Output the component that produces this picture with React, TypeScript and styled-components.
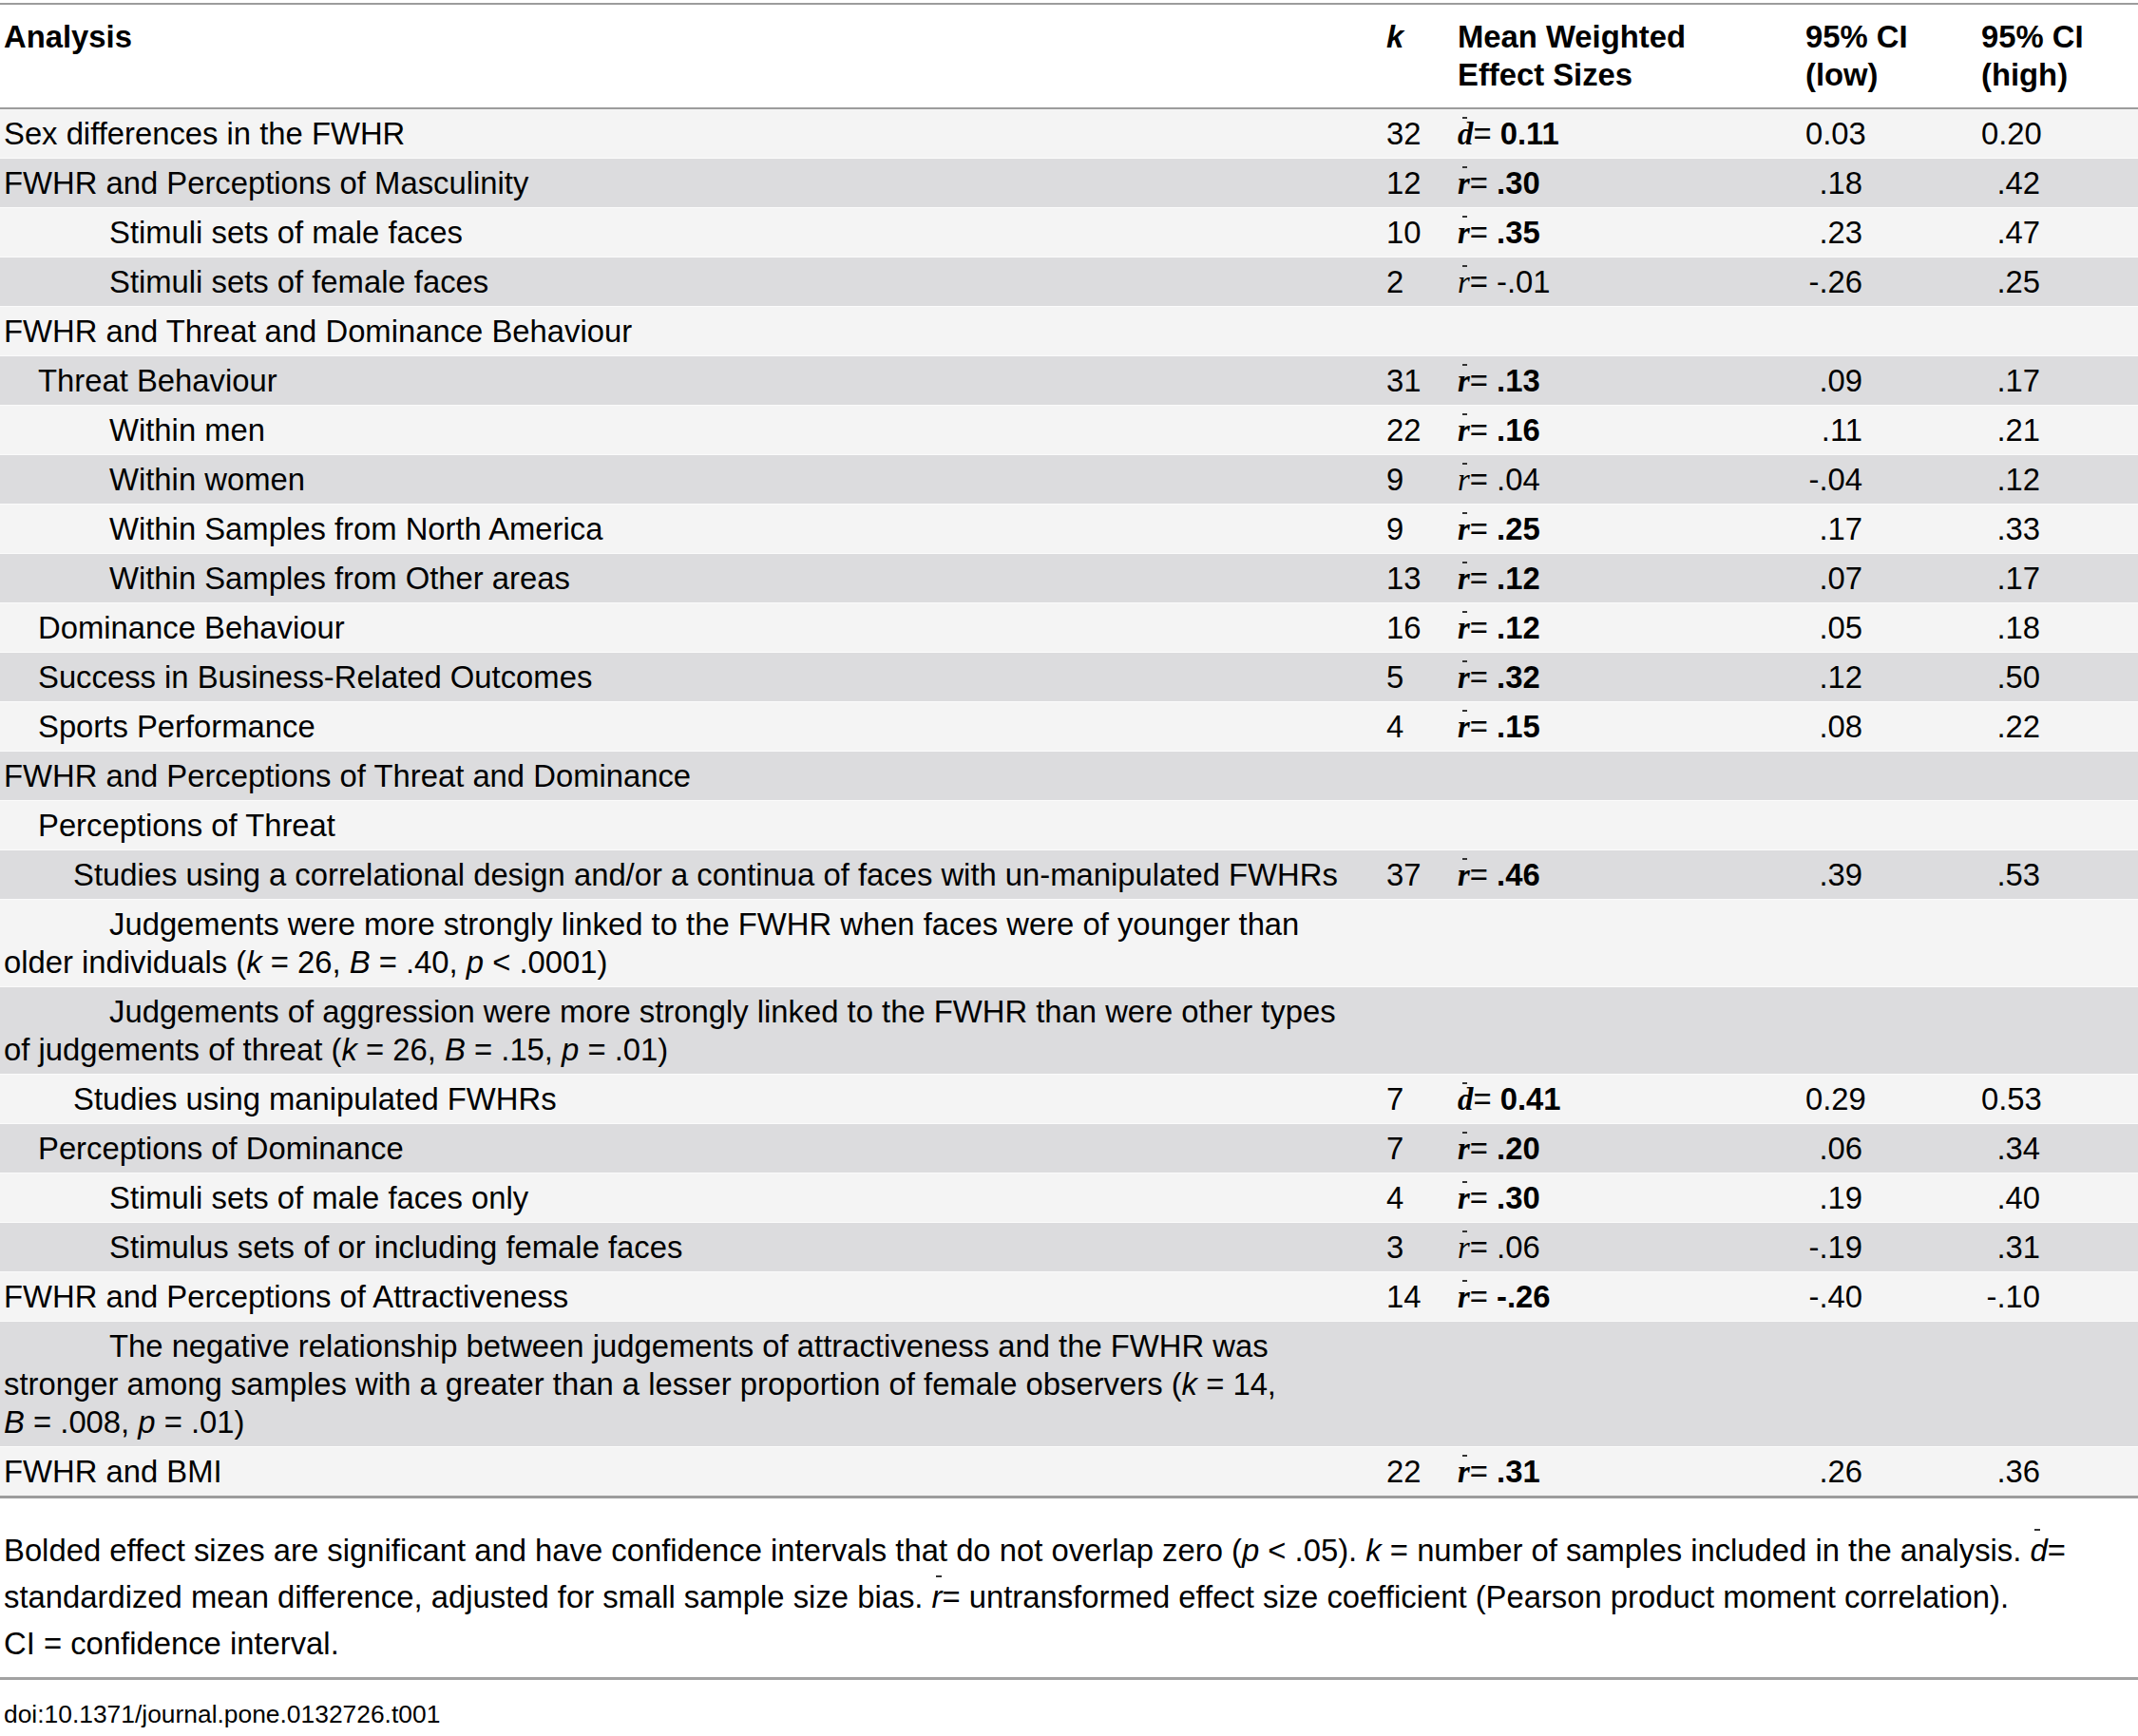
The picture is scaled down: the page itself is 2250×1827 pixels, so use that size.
import React from 'react';
import styled, { createGlobalStyle } from 'styled-components';

const GlobalStyle = createGlobalStyle`
  body {
    margin: 0;
    background: #ffffff;
    color: #000000;
    font-family: "Liberation Sans", Arial, Helvetica, sans-serif;
  }
`;

const Page = styled.div`
  width: 2250px;
  padding-top: 3px;
`;

const Table = styled.table`
  width: 2250px;
  border-collapse: collapse;
  table-layout: fixed;
  font-size: 32.8px;
  border-top: 2px solid #9c9c9c;
  border-bottom: 3px solid #9c9c9c;
`;

const HeadCell = styled.th<{ $first?: boolean }>`
  text-align: left;
  vertical-align: top;
  font-weight: bold;
  line-height: 40px;
  padding: 14px 7px 14px ${(p) => (p.$first ? '4px' : '7px')};
  border-bottom: 2px solid #9c9c9c;
  background: #ffffff;
`;

const Row = styled.tr<{ $dark: boolean }>`
  background: ${(p) => (p.$dark ? '#dcdcde' : '#f4f4f4')};
  border-top: 1px solid #fbfbfb;
`;

const Cell = styled.td`
  vertical-align: top;
  line-height: 40px;
  padding: 6px 7px 5px;
  white-space: nowrap;
`;

// first-line indent for each nesting level of the analysis column
const indents = [0, 36, 73, 111];

const NameCell = styled(Cell)<{ $level: number }>`
  padding-left: 4px;
  white-space: normal;
  text-indent: ${(p) => indents[p.$level]}px;
`;

const CiCell = styled(Cell)<{ $pr: number }>`
  text-align: right;
  padding-right: ${(p) => p.$pr}px;
`;

const Italic = styled.i`
  font-style: italic;
`;

const Sym = styled.span<{ $serif?: boolean; $bold?: boolean }>`
  position: relative;
  display: inline-block;
  font-style: italic;
  font-family: ${(p) => (p.$serif ? '"Liberation Serif", "Times New Roman", serif' : 'inherit')};
  font-weight: ${(p) => (p.$bold ? 'bold' : 'normal')};

  &::before {
    content: '';
    position: absolute;
    top: 0.06em;
    left: 0.14em;
    width: 0.17em;
    height: 2px;
    background: #333333;
  }
`;

const Value = styled.span<{ $bold: boolean }>`
  font-weight: ${(p) => (p.$bold ? 'bold' : 'normal')};
`;

const Notes = styled.p`
  margin: 30px 0 0;
  padding: 0 4px;
  font-size: 32.8px;
  line-height: 49px;
`;

const Rule = styled.div`
  height: 3px;
  margin-top: 11px;
  background: #a2a2a2;
`;

const Doi = styled.div`
  margin-top: 18px;
  padding: 0 4px;
  font-size: 26.4px;
  line-height: 36px;
`;

type DataRow = {
  name: React.ReactNode;
  level: number;
  k?: string;
  sym?: 'd' | 'r';
  value?: string;
  bold?: boolean;
  low?: string;
  high?: string;
};

const rows: DataRow[] = [
  { name: 'Sex differences in the FWHR', level: 0, k: '32', sym: 'd', value: '0.11', bold: true, low: '0.03', high: '0.20' },
  { name: 'FWHR and Perceptions of Masculinity', level: 0, k: '12', sym: 'r', value: '.30', bold: true, low: '.18', high: '.42' },
  { name: 'Stimuli sets of male faces', level: 3, k: '10', sym: 'r', value: '.35', bold: true, low: '.23', high: '.47' },
  { name: 'Stimuli sets of female faces', level: 3, k: '2', sym: 'r', value: '-.01', low: '-.26', high: '.25' },
  { name: 'FWHR and Threat and Dominance Behaviour', level: 0 },
  { name: 'Threat Behaviour', level: 1, k: '31', sym: 'r', value: '.13', bold: true, low: '.09', high: '.17' },
  { name: 'Within men', level: 3, k: '22', sym: 'r', value: '.16', bold: true, low: '.11', high: '.21' },
  { name: 'Within women', level: 3, k: '9', sym: 'r', value: '.04', low: '-.04', high: '.12' },
  { name: 'Within Samples from North America', level: 3, k: '9', sym: 'r', value: '.25', bold: true, low: '.17', high: '.33' },
  { name: 'Within Samples from Other areas', level: 3, k: '13', sym: 'r', value: '.12', bold: true, low: '.07', high: '.17' },
  { name: 'Dominance Behaviour', level: 1, k: '16', sym: 'r', value: '.12', bold: true, low: '.05', high: '.18' },
  { name: 'Success in Business-Related Outcomes', level: 1, k: '5', sym: 'r', value: '.32', bold: true, low: '.12', high: '.50' },
  { name: 'Sports Performance', level: 1, k: '4', sym: 'r', value: '.15', bold: true, low: '.08', high: '.22' },
  { name: 'FWHR and Perceptions of Threat and Dominance', level: 0 },
  { name: 'Perceptions of Threat', level: 1 },
  {
    name: 'Studies using a correlational design and/or a continua of faces with un-manipulated FWHRs',
    level: 2, k: '37', sym: 'r', value: '.46', bold: true, low: '.39', high: '.53',
  },
  {
    name: (
      <>
        Judgements were more strongly linked to the FWHR when faces were of younger than
        <br />
        older individuals (<Italic>k</Italic> = 26, <Italic>B</Italic> = .40, <Italic>p</Italic> &lt; .0001)
      </>
    ),
    level: 3,
  },
  {
    name: (
      <>
        Judgements of aggression were more strongly linked to the FWHR than were other types
        <br />
        of judgements of threat (<Italic>k</Italic> = 26, <Italic>B</Italic> = .15, <Italic>p</Italic> = .01)
      </>
    ),
    level: 3,
  },
  { name: 'Studies using manipulated FWHRs', level: 2, k: '7', sym: 'd', value: '0.41', bold: true, low: '0.29', high: '0.53' },
  { name: 'Perceptions of Dominance', level: 1, k: '7', sym: 'r', value: '.20', bold: true, low: '.06', high: '.34' },
  { name: 'Stimuli sets of male faces only', level: 3, k: '4', sym: 'r', value: '.30', bold: true, low: '.19', high: '.40' },
  { name: 'Stimulus sets of or including female faces', level: 3, k: '3', sym: 'r', value: '.06', low: '-.19', high: '.31' },
  { name: 'FWHR and Perceptions of Attractiveness', level: 0, k: '14', sym: 'r', value: '-.26', bold: true, low: '-.40', high: '-.10' },
  {
    name: (
      <>
        The negative relationship between judgements of attractiveness and the FWHR was
        <br />
        stronger among samples with a greater than a lesser proportion of female observers (<Italic>k</Italic> = 14,
        <br />
        <Italic>B</Italic> = .008, <Italic>p</Italic> = .01)
      </>
    ),
    level: 3,
  },
  { name: 'FWHR and BMI', level: 0, k: '22', sym: 'r', value: '.31', bold: true, low: '.26', high: '.36' },
];

const App: React.FC = () => {
  return (
    <Page>
      <GlobalStyle />
      <Table>
        <colgroup>
          <col style={{ width: 1452 }} />
          <col style={{ width: 75 }} />
          <col style={{ width: 366 }} />
          <col style={{ width: 185 }} />
          <col style={{ width: 172 }} />
        </colgroup>
        <thead>
          <tr>
            <HeadCell $first>Analysis</HeadCell>
            <HeadCell>
              <Italic>k</Italic>
            </HeadCell>
            <HeadCell>
              Mean Weighted
              <br />
              Effect Sizes
            </HeadCell>
            <HeadCell>
              95% CI
              <br />
              (low)
            </HeadCell>
            <HeadCell>
              95% CI
              <br />
              (high)
            </HeadCell>
          </tr>
        </thead>
        <tbody>
          {rows.map((row, i) => (
            <Row key={i} $dark={i % 2 === 1}>
              <NameCell $level={row.level}>{row.name}</NameCell>
              <Cell>{row.k}</Cell>
              <Cell>
                {row.sym && (
                  <>
                    <Sym $serif $bold={row.bold}>{row.sym}</Sym>= <Value $bold={!!row.bold}>{row.value}</Value>
                  </>
                )}
              </Cell>
              <CiCell $pr={118}>{row.low}</CiCell>
              <CiCell $pr={103}>{row.high}</CiCell>
            </Row>
          ))}
        </tbody>
      </Table>

      <Notes>
        Bolded effect sizes are significant and have confidence intervals that do not overlap zero (<Italic>p</Italic> &lt; .05).{' '}
        <Italic>k</Italic> = number of samples included in the analysis. <Sym>d</Sym>= standardized mean difference, adjusted
        for small sample size bias. <Sym>r</Sym>= untransformed effect size coefficient (Pearson product moment correlation).
        <br />
        CI = confidence interval.
      </Notes>
      <Rule />
      <Doi>doi:10.1371/journal.pone.0132726.t001</Doi>
    </Page>
  );
};

export default App;
